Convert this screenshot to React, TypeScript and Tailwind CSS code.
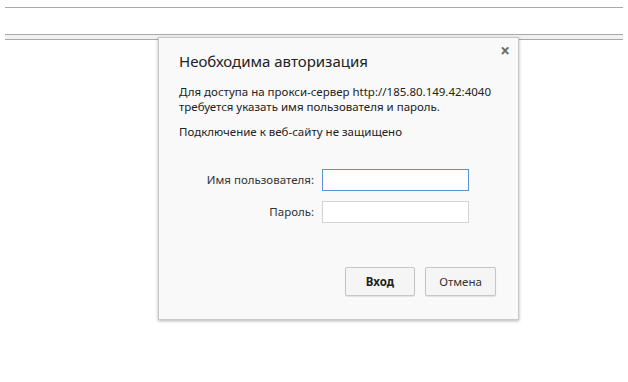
import React from "react";

const App = () => {
  return (
    <div className="relative w-[628px] h-[382px] bg-white overflow-hidden" style={{ fontFamily: '"Noto Sans", "Open Sans", sans-serif' }}>
      {/* browser chrome lines */}
      <div className="pt-[7px] px-[5px]">
        <div className="h-px bg-[#a9a9a9]" />
        <div className="mt-[26px] h-[6px] border-t border-b border-[#a9a9a9] bg-[#f1f1f1]" />
      </div>

      {/* auth dialog */}
      <div className="absolute left-[158px] top-[37px] w-[361px] h-[283px] bg-[#f9f9f9] border border-[#c8c8c8] shadow-[0_1px_3px_rgba(0,0,0,0.3)] text-[#333]">
        <button className="absolute right-[8px] top-[4px] text-[17px] leading-none font-bold text-[#6b6b6b]">×</button>

        <div className="pl-[20px] pt-[12px]">
          <h2 className="text-[15px] leading-[22px] text-[#222]">Необходима авторизация</h2>
          <p className="mt-[12px] text-[11.5px] leading-[15px] text-[#222]">
            Для доступа на прокси-сервер http://185.80.149.42:4040
            <br />
            требуется указать имя пользователя и пароль.
          </p>
          <p className="mt-[10px] text-[11.5px] leading-[15px] text-[#222]">Подключение к веб-сайту не защищено</p>
        </div>

        <div className="mt-[30px] flex flex-col gap-[10px]">
          <div className="flex items-center">
            <label className="w-[155px] text-right text-[11.5px] text-[#333]">Имя пользователя:</label>
            <input className="ml-[8px] w-[147px] h-[22px] bg-white border border-[#5b8fd6] outline-none" />
          </div>
          <div className="flex items-center">
            <label className="w-[155px] text-right text-[11.5px] text-[#333]">Пароль:</label>
            <input type="password" className="ml-[8px] w-[147px] h-[22px] bg-white border border-[#d4d4d4] outline-none" />
          </div>
        </div>

        <div className="mt-[44px] pr-[22px] flex justify-end gap-[10px]">
          <button className="w-[70px] h-[29px] border border-[#c6c6c6] rounded-[2px] bg-[#f5f5f5] shadow-[0_1px_1px_rgba(0,0,0,0.1)] text-[11.5px] font-bold text-[#222]">Вход</button>
          <button className="w-[71px] h-[29px] border border-[#c6c6c6] rounded-[2px] bg-[#f5f5f5] shadow-[0_1px_1px_rgba(0,0,0,0.1)] text-[11.5px] text-[#333]">Отмена</button>
        </div>
      </div>
    </div>
  );
};

export default App;
